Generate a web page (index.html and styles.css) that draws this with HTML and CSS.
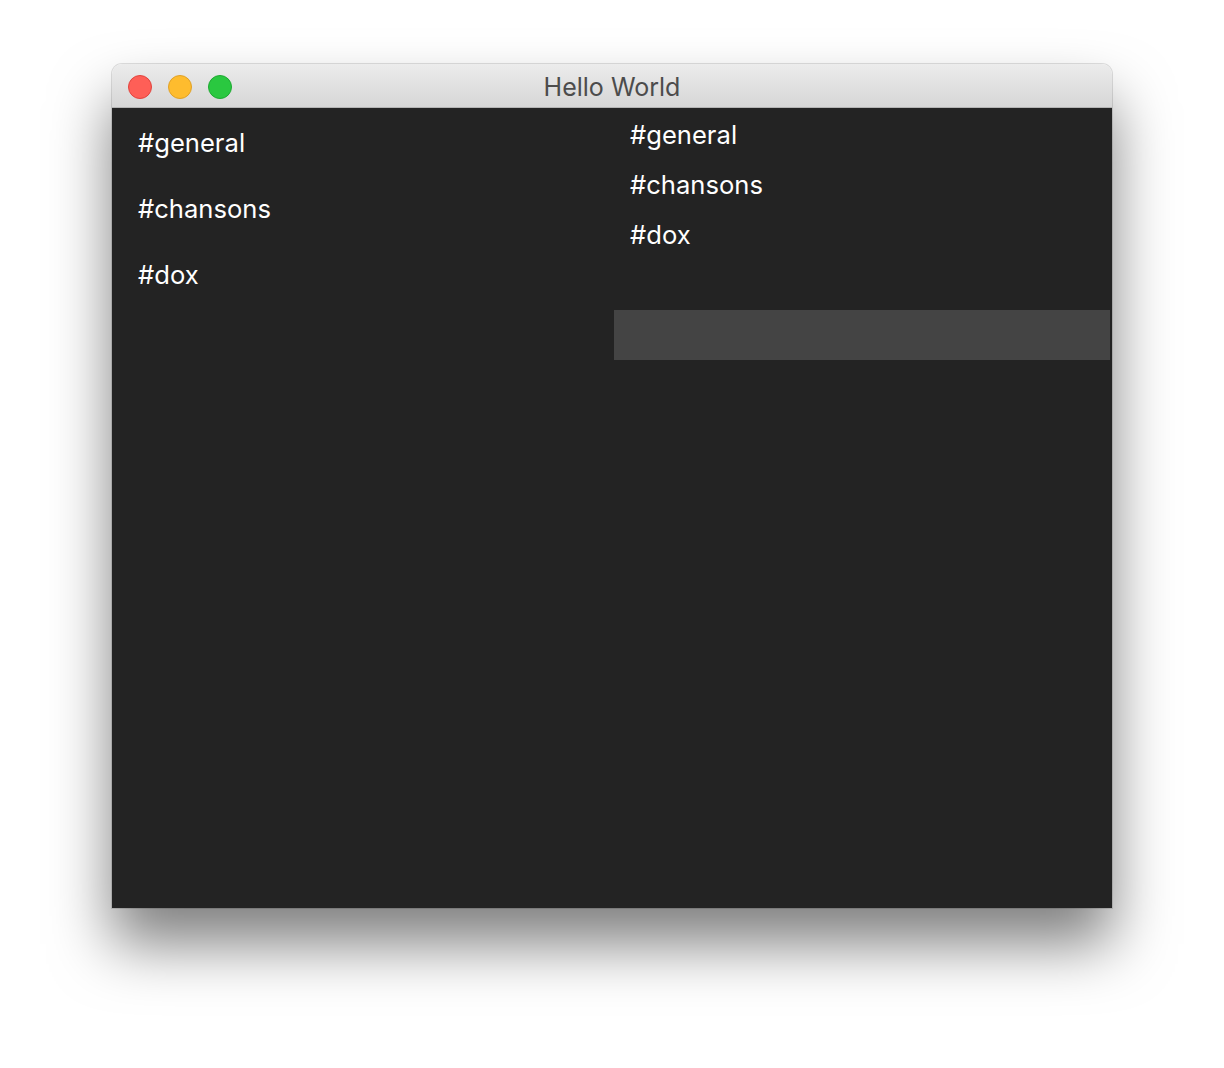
FILE: index.html
```html
<!DOCTYPE html>
<html lang="en">
<head>
  <meta charset="UTF-8">
  <title>Hello World</title>
  <link rel="stylesheet" href="styles.css">
</head>
<body>
  <div class="window">
    <div class="titlebar">
      <div class="lights">
        <span class="light close"></span>
        <span class="light minimize"></span>
        <span class="light zoom"></span>
      </div>
      <div class="title">Hello World</div>
    </div>

    <div class="content">
      <ul class="channels">
        <li>#general</li>
        <li>#chansons</li>
        <li>#dox</li>
      </ul>

      <div class="side">
        <ul class="side-list">
          <li>#general</li>
          <li>#chansons</li>
          <li>#dox</li>
        </ul>
        <div class="input-box"></div>
      </div>
    </div>
  </div>
</body>
</html>
```

FILE: styles.css
```css
* {
  box-sizing: border-box;
  margin: 0;
  padding: 0;
}

body {
  background: #fff;
  font-family: Inter, 'Noto Sans', sans-serif;
  display: flex;
  justify-content: center;
  padding-top: 64px;
  height: 1068px;
}

.window {
  width: 1000px;
  height: 844px;
  display: flex;
  flex-direction: column;
  border-radius: 10px 10px 0 0;
  box-shadow: 0 0 0 1px rgba(0, 0, 0, 0.12), 0 36px 60px rgba(0, 0, 0, 0.5);
}

.titlebar {
  height: 44px;
  display: flex;
  align-items: center;
  position: relative;
  background: linear-gradient(#ececec, #d6d6d6);
  border-bottom: 1px solid #b4b4b4;
  border-radius: 10px 10px 0 0;
}

.lights {
  display: flex;
  gap: 16px;
  padding-left: 16px;
  padding-top: 2px;
}

.light {
  width: 24px;
  height: 24px;
  border-radius: 50%;
}

.close {
  background: #fe5f57;
  border: 1px solid #e1443e;
}

.minimize {
  background: #febc2e;
  border: 1px solid #e0a127;
}

.zoom {
  background: #2ac840;
  border: 1px solid #1ea932;
}

.title {
  position: absolute;
  left: 0;
  right: 0;
  top: 8px;
  text-align: center;
  font-size: 25px;
  color: #4c4c4c;
  pointer-events: none;
}

.content {
  flex: 1;
  display: flex;
  background: #232323;
  color: #fff;
}

.content ul {
  list-style: none;
  font-size: 25.6px;
  line-height: 34px;
}

.channels {
  width: 500px;
  padding: 18px 26px;
  display: flex;
  flex-direction: column;
  gap: 32px;
}

.side {
  flex: 1;
  padding: 0 2px;
}

.side-list {
  padding: 10px 16px 0;
  display: flex;
  flex-direction: column;
  gap: 16px;
}

.input-box {
  margin-top: 58px;
  height: 50px;
  background: #444;
}
```
